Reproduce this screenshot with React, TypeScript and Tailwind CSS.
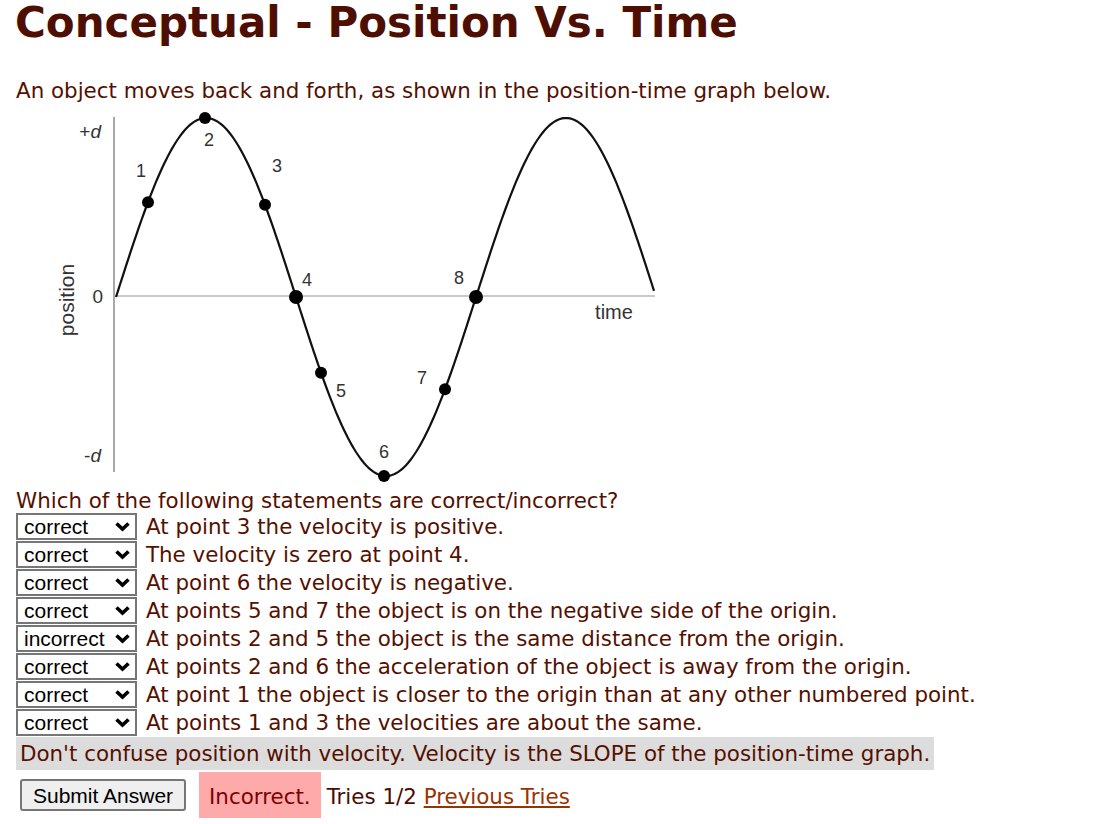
import React from "react";

const statements = [
  { value: "correct", text: "At point 3 the velocity is positive." },
  { value: "correct", text: "The velocity is zero at point 4." },
  { value: "correct", text: "At point 6 the velocity is negative." },
  { value: "correct", text: "At points 5 and 7 the object is on the negative side of the origin." },
  { value: "incorrect", text: "At points 2 and 5 the object is the same distance from the origin." },
  { value: "correct", text: "At points 2 and 6 the acceleration of the object is away from the origin." },
  { value: "correct", text: "At point 1 the object is closer to the origin than at any other numbered point." },
  { value: "correct", text: "At points 1 and 3 the velocities are about the same." },
];

// sine wave in page coordinates
const X0 = 116;
const MID = 297;
const AMP = 179;
const waveY = (x: number) => MID - AMP * Math.sin((2 * Math.PI * (x - X0)) / 360);

const wavePath = (() => {
  let d = "";
  for (let x = X0; x <= 655; x += 2) {
    d += `${x === X0 ? "M" : "L"}${x},${waveY(x).toFixed(1)} `;
  }
  return d;
})();

const dots = [148, 205, 265, 296, 321, 384, 445, 476];

const labels = [
  { t: "1", x: 141, y: 177 },
  { t: "2", x: 209, y: 146 },
  { t: "3", x: 277, y: 172 },
  { t: "4", x: 307, y: 286 },
  { t: "5", x: 341, y: 397 },
  { t: "6", x: 384, y: 458 },
  { t: "7", x: 422, y: 384 },
  { t: "8", x: 459, y: 284 },
];

const PositionGraph: React.FC = () => (
  <svg
    width={680}
    height={376}
    viewBox="16 110 680 376"
    className="block"
    style={{ fontFamily: "'Liberation Sans', Arial, sans-serif" }}
  >
    {/* axes */}
    <line x1={114} y1={117} x2={114} y2={472} stroke="#a8a8a8" strokeWidth={2} />
    <line x1={114} y1={296} x2={655} y2={296} stroke="#b8b8b8" strokeWidth={1.5} />

    {/* axis labels */}
    <text x={101} y={138} fontSize={19} fill="#333" textAnchor="end">
      +<tspan fontStyle="italic">d</tspan>
    </text>
    <text x={103} y={303} fontSize={19} fill="#333" textAnchor="end">0</text>
    <text x={101} y={462} fontSize={19} fill="#333" textAnchor="end">
      -<tspan fontStyle="italic">d</tspan>
    </text>
    <text
      x={0}
      y={0}
      fontSize={21}
      fill="#333"
      textAnchor="middle"
      transform="translate(74 300) rotate(-90)"
    >
      position
    </text>
    <text x={614} y={319} fontSize={20} fill="#333" textAnchor="middle">time</text>

    {/* curve */}
    <path d={wavePath} fill="none" stroke="#111" strokeWidth={2.2} />

    {dots.map((x) => (
      <circle key={x} cx={x} cy={waveY(x)} r={x === 296 || x === 476 ? 7 : 6} fill="#000" />
    ))}

    {labels.map((l) => (
      <text key={l.t} x={l.x} y={l.y} fontSize={18} fill="#333" textAnchor="middle">
        {l.t}
      </text>
    ))}
  </svg>
);

const AnswerSelect: React.FC<{ value: string }> = ({ value }) => (
  <div className="relative w-[121px] h-[27px] shrink-0">
    <select
      defaultValue={value}
      className="appearance-none w-full h-full border-2 border-[#767676] bg-white pl-[6px] text-[21px] leading-none text-black outline-none"
      style={{ fontFamily: "'Liberation Sans', Arial, sans-serif" }}
    >
      <option value="correct">correct</option>
      <option value="incorrect">incorrect</option>
    </select>
    <svg
      className="absolute right-[6px] top-[8px] pointer-events-none"
      width="17"
      height="11"
      viewBox="0 0 17 11"
    >
      <polyline points="2.5,2.5 8.5,8 14.5,2.5" fill="none" stroke="#000" strokeWidth="3.6" />
    </svg>
  </div>
);

export default function App() {
  return (
    <div
      className="pl-[16px] text-[#551000] bg-white min-h-[824px]"
      style={{ fontFamily: "'DejaVu Sans', Verdana, sans-serif" }}
    >
      <h1 className="pt-[1px] text-[42px] leading-[44px] font-bold text-[#4f0e02] -ml-[1px]">
        Conceptual - Position Vs. Time
      </h1>

      <p className="mt-[32px] text-[21.4px] leading-[28px]">
        An object moves back and forth, as shown in the position-time graph below.
      </p>

      <div className="mt-[5px]">
        <PositionGraph />
      </div>

      <p className="mt-[1px] text-[21.4px] leading-[28px]">
        Which of the following statements are correct/incorrect?
      </p>

      <div className="flex flex-col -mt-[2px]">
        {statements.map((s, i) => (
          <div key={i} className="flex items-start h-[28px] gap-[9px]">
            <AnswerSelect value={s.value} />
            <span className="text-[21.4px] leading-[28px]">{s.text}</span>
          </div>
        ))}
      </div>

      <div className="inline-flex items-center h-[33px] px-[4px] bg-[#dcdcdc] text-[21.4px] leading-[28px]">
        Don't confuse position with velocity. Velocity is the SLOPE of the position-time graph.
      </div>

      <div className="flex items-start mt-[2px]">
        <button
          className="ml-[4px] mt-[7px] h-[32px] px-[11px] border-2 border-[#767676] rounded-[3px] bg-[#efefef] text-[21px] leading-none text-black"
          style={{ fontFamily: "'Liberation Sans', Arial, sans-serif" }}
        >
          Submit Answer
        </button>
        <span className="ml-[13px] h-[46px] px-[10px] pt-[11px] bg-[#ffaaaa] text-[#7d0000] text-[21.4px] leading-[28px]">
          Incorrect.
        </span>
        <span className="ml-[6px] pt-[11px] text-[21.4px] leading-[28px] text-[#4a0d00]">
          Tries 1/2{" "}
          <a href="#" className="text-[#993300] underline">
            Previous Tries
          </a>
        </span>
      </div>
    </div>
  );
}
